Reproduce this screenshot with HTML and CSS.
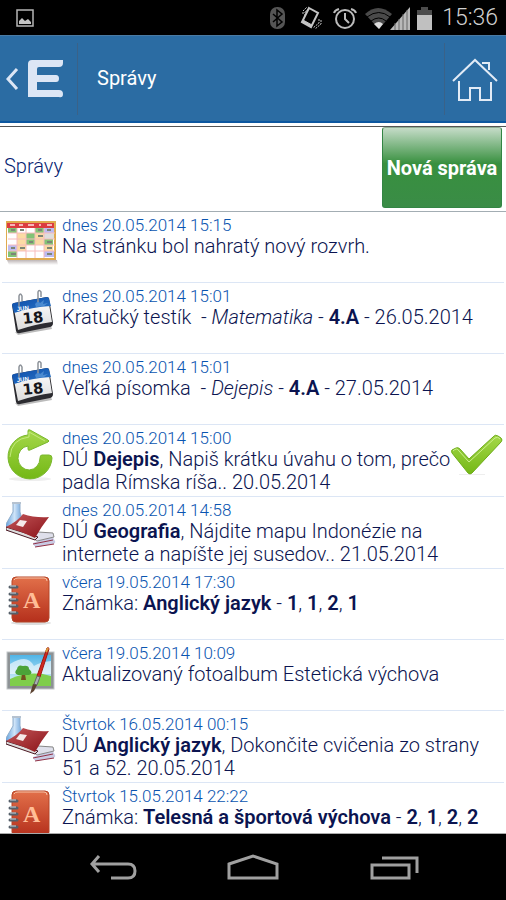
FILE: index.html
```html
<!DOCTYPE html>
<html lang="sk">
<head>
<meta charset="utf-8">
<meta name="viewport" content="width=device-width, initial-scale=1">
<title>Správy</title>
<link rel="stylesheet" href="styles.css">
</head>
<body>
<svg class="sprite" aria-hidden="true">
  <defs>
    <linearGradient id="green" x1="0" y1="0" x2="0" y2="1"><stop offset="0" stop-color="#a5d84a"/><stop offset="1" stop-color="#74b816"/></linearGradient>
    <linearGradient id="blue" x1="0" y1="0" x2="1" y2="1"><stop offset="0" stop-color="#0b4aa8"/><stop offset="1" stop-color="#2d78c8"/></linearGradient>
    <linearGradient id="paper" x1="0" y1="0" x2="0" y2="1"><stop offset="0" stop-color="#fff"/><stop offset="1" stop-color="#dcdcdc"/></linearGradient>
    <linearGradient id="cover" x1="0" y1="0" x2="0" y2="1"><stop offset="0" stop-color="#e2704a"/><stop offset="1" stop-color="#b5301c"/></linearGradient>
    <linearGradient id="maroon" x1="0" y1="0" x2="1" y2="1"><stop offset="0" stop-color="#c4575a"/><stop offset="1" stop-color="#8a1218"/></linearGradient>
    <linearGradient id="sky" x1="0" y1="0" x2="0" y2="1"><stop offset="0" stop-color="#4fb4e6"/><stop offset="1" stop-color="#e6f7fc"/></linearGradient>
    <linearGradient id="flask" x1="0" y1="0" x2="1" y2="0"><stop offset="0" stop-color="#5f9edb"/><stop offset=".5" stop-color="#cfe4f8"/><stop offset="1" stop-color="#5a97d6"/></linearGradient>
    <linearGradient id="shade" x1="0" y1="0" x2="0" y2="1"><stop offset="0" stop-color="#bdb5b5"/><stop offset="1" stop-color="#fff"/></linearGradient>
  </defs>
  <symbol id="timetable" viewBox="0 0 56 56">
    <path d="M1 44h50l1 5H3z" fill="url(#shade)"/>
    <rect x="0" y="6" width="49" height="37" fill="#fff" stroke="#e0ab50" stroke-width="2"/>
    <rect x="1" y="7" width="47" height="5" fill="#dc3c40"/>
    <path d="M4 9h5M13 9h4M22 9h6M33 9h2M41 9h5" stroke="#f6b6b6" stroke-width="2"/>
    <path d="M2 12h9v5H2zM29 12h9v5h-9zM20 17h9v12h-9zM38 23h9v6h-9zM2 35h9v6H2z" fill="#83c376"/>
    <path d="M11 17h9v12h-9zM29 17h9v12h-9zM11 29h9v6h-9zM38 29h9v6h-9z" fill="#fbdba4"/>
    <path d="M38 12h10v5H38zM2 29h9v6H2zM38 35h10v6H38z" fill="#bcbbf2"/>
    <path d="M38 17h10v6H38z" fill="#ddd"/>
    <path d="M11 12v30M20 12v30M29 12v30M38 12v30M2 17h47M2 23h47M2 29h47M2 35h47" stroke="#f7bcbc"/>
    <path d="M5 14h4M14 14h4M32 14h4M41 14h4M32 20h5M23 26h4M41 26h5M5 32h4M14 32h5M41 32h5M5 38h5M41 38h5" stroke="#7d8676" stroke-width="2"/>
  </symbol>
  <symbol id="calendar" viewBox="0 0 56 56">
    <path d="M9 45l36-6 1 3-34 6z" fill="#bbb"/>
    <path d="M6 18l4 26q1 3 4 2l30-6q3-1 3-4l-4-25-2-1L8 16z" fill="#2b2b30"/>
    <path d="M7 17l35-6 4 24q-16 2-34 8z" fill="url(#paper)"/>
    <path d="M6 18q0-2 2-2l33-6q2 0 2 2l2 7Q26 20 8 26z" fill="url(#blue)"/>
    <path d="M29 17l3-3 2 2 4-3-1 4 5-1-4 3-8 1z" fill="#68a3df" opacity=".6"/>
    <path d="M13 19V9q1-4 3 0v5M32 15V5q1-3 3 0v5" fill="none" stroke="#8d9299" stroke-width="1.500"/>
  </symbol>
  <symbol id="refresh" viewBox="0 0 56 56">
    <ellipse cx="24" cy="50" rx="21" ry="2" fill="#eee"/>
    <path d="M22 6V2q0-2 2-1l18 10q2 1 0 2L24 21q-2 1-2-1v-3A11 12 0 1 0 34 29q0-3 2-3h7q3 0 3 3A22 22 0 1 1 22 6z" fill="url(#green)" stroke="#7ab82e"/>
    <path d="M4 28Q5 10 23 8V3l16 9" fill="none" stroke="#cdef8c" opacity=".8"/>
  </symbol>
  <symbol id="check" viewBox="0 0 54 42">
    <path d="M9 40h26v1H9z" fill="#eee"/>
    <path d="M2 19q-1-2 0-3l4-2q2-1 4 1l9 10L43 3q2-3 5-1l3 2q2 2 0 4L22 39q-2 2-4 0z" fill="url(#green)" stroke="#6dac18"/>
    <path d="M3 17q4-4 6 0l10 11L45 4q3-2 5 1" fill="none" stroke="#cdf08c"/>
  </symbol>
  <symbol id="homework" viewBox="0 0 56 56">
    <path d="M7 2h7v9l3 10q2 8-5 9H3q-5-2-3-7l7-12z" fill="url(#flask)" stroke="#91aecb"/>
    <path d="M6 2h9" stroke="#b5c2d0" stroke-width="2"/>
    <path d="M27 42l19-7 3 5q1 2-2 3l-16 3q-3 0-4-4z" fill="#c9cbe4"/>
    <path d="M27 43l20-4M29 46l19-3" stroke="#943346"/>
    <path d="M28 38q-1-5 4-7l15 1 1 4-17 4z" fill="#dfe0eb" stroke="#888"/>
    <path d="M0 26v3l29 10 3-3z" fill="#ddd" stroke="#4b1721"/>
    <path d="M0 26Q12 20 17 13q12 4 26 3-8 10-14 21Q15 30 0 26z" fill="url(#maroon)"/>
    <path d="M14 19l7 1-4 6-7-2z" fill="#f5eaea"/>
  </symbol>
  <symbol id="grade" viewBox="0 0 56 56">
    <ellipse cx="25" cy="50" rx="20" ry="2" fill="#ddd"/>
    <rect x="6" y="4" width="37" height="45" rx="4" fill="url(#cover)" stroke="#b44427"/>
    <path d="M8 7q1-2 4-2h26q3 0 3 3" fill="none" stroke="#f6c2a5"/>
    <path d="M4 14h7M4 21h7M4 27h7M4 33h7M4 40h7" stroke="#56606a" stroke-width="3" stroke-linecap="round"/>
    <path d="M4 13h6M4 20h6M4 26h6M4 32h6M4 39h6" stroke="#c8d6df"/>
  </symbol>
  <symbol id="photo" viewBox="0 0 56 56">
    <rect x="1" y="8" width="47" height="37" fill="#8d9295" stroke="#c4c7c9"/>
    <rect x="4" y="11" width="41" height="31" fill="url(#sky)"/>
    <path d="M4 20q8-5 14-5t10 7q6-4 17-5v13H4z" fill="#fff" opacity=".6"/>
    <path d="M4 35q20-9 41-3v10H4z" fill="#7fce4b"/>
    <path d="M16 30h3l1 6h-5z" fill="#73521f"/>
    <path d="M12 31q-5-2-1-6 1-5 6-3 6-1 6 3 5 4 0 6z" fill="#4ba338"/>
    <path d="M41 4q2-1 2 1l-9 28-3-1z" fill="#d32a20" stroke="#9f1713"/>
    <path d="M40 8l2-4" stroke="#d99c3e" stroke-width="2"/>
    <path d="M31 32l3 1-3 8-3-1z" fill="#a9afb3" stroke="#666"/>
    <path d="M27 40l4 1-3 6-4 3z" fill="#5c4332"/>
  </symbol>
</svg>

<header class="status">
  <svg class="status-shot" viewBox="0 0 18 18" aria-hidden="true"><rect x="1" y="1" width="16" height="16" fill="none" stroke="#b5b5b5" stroke-width="1.500"/><path d="M3 15v-3l3-3 3 3 3-2 3 3v2z" fill="#c4c4c4"/></svg>
  <div class="status-right">
    <svg class="status-icons" viewBox="0 0 164 26" aria-hidden="true">
      <rect x="0" y="2" width="15" height="22" rx="7" fill="#555"/>
      <path d="M3 9l9 8-5 4V5l5 4-9 8" fill="none" stroke="#000" stroke-width="1.500"/>
      <g fill="none" stroke="#c4c4c4"><path d="M39 3l9 5-7 14-9-5z" stroke-width="2"/><path d="M33 15l9 5-1 2-9-5z" fill="#c4c4c4"/><path d="M33 9V6l4-4M35 11V7l3-3M49 14v4l-6 5M51 15v4l-6 5" stroke-dasharray="2 1"/></g>
      <g fill="none" stroke="#bbb" stroke-width="2"><circle cx="75" cy="14" r="9"/><path d="M75 8v6l4 4M64 8q1-3 5-4M86 8q-1-3-5-4"/></g>
      <path d="M95 9q13-12 27 0l-13 15z" fill="#4a4a4a"/><path d="M97 12q12-9 23 0M101 16q8-6 15 0" fill="none" stroke="#000"/><path d="M104 19q5-4 9 0l-4 5z" fill="#ddd"/>
      <path d="M120 25l20-23v23z" fill="#b9b9b9"/><path d="M125 18v7M129 14v11M133 9v16M137 5v20" stroke="#666"/>
      <path d="M147 5h4V2h7v3h4v5h-15z" fill="#4c4c4c"/><path d="M147 10h15v15h-15z" fill="#c0c0c0"/>
    </svg>
    <time class="clock">15:36</time>
  </div>
</header>

<nav class="appbar">
  <a class="back" href="#" aria-label="Späť">
    <svg viewBox="0 0 60 42" aria-hidden="true"><path d="M11 11L2 21l9 10" fill="none" stroke="#dce6f5" stroke-width="3"/>
      <path d="M22 6Q22 2 26 2H57V5Q57 9 53 9H33Q31 9 31 11V17H50Q53 17 53 20.500T50 24H31V32H53Q57 32 57 36T53 39H22z" fill="#dce6f5"/></svg>
  </a>
  <h1 class="appbar-title">Správy</h1>
  <a class="home" href="#" aria-label="Domov">
    <svg viewBox="0 0 46 44" aria-hidden="true"><path d="M1 23L23 2l22 21M7 23v19h11V30h10v12h11V24M30 5h7v7" fill="none" stroke="#e2ebf6" stroke-width="2"/></svg>
  </a>
</nav>

<main class="page">
  <div class="toolbar">
    <h2 class="toolbar-title">Správy</h2>
    <button class="new-message" type="button">Nová správa</button>
  </div>
  <ul class="messages">
    <li class="message"><svg class="icon" aria-hidden="true"><use href="#timetable"/></svg><div class="body"><time class="date">dnes 20.05.2014 15:15</time><p class="text">Na stránku bol nahratý nový rozvrh.</p></div></li>
    <li class="message"><svg class="icon" viewBox="0 0 56 56" aria-hidden="true"><use href="#calendar"/><text x="11" y="24" transform="rotate(-6 11 24)" class="month">JUN</text><text x="17" y="37" transform="rotate(-6 17 37)" class="day">18</text></svg><div class="body"><time class="date">dnes 20.05.2014 15:01</time><p class="text">Kratučký testík &nbsp;- <i>Matematika</i> - <b>4.A</b> - 26.05.2014</p></div></li>
    <li class="message"><svg class="icon" viewBox="0 0 56 56" aria-hidden="true"><use href="#calendar"/><text x="11" y="24" transform="rotate(-6 11 24)" class="month">JUN</text><text x="17" y="37" transform="rotate(-6 17 37)" class="day">18</text></svg><div class="body"><time class="date">dnes 20.05.2014 15:01</time><p class="text">Veľká písomka &nbsp;- <i>Dejepis</i> - <b>4.A</b> - 27.05.2014</p></div></li>
    <li class="message"><svg class="icon" aria-hidden="true"><use href="#refresh"/></svg><div class="body"><time class="date">dnes 20.05.2014 15:00</time><p class="text">DÚ <b>Dejepis</b>, Napiš krátku úvahu o tom, prečo<br>padla Rímska ríša.. 20.05.2014</p></div><svg class="done" role="img" aria-label="Hotovo"><use href="#check"/></svg></li>
    <li class="message"><svg class="icon" aria-hidden="true"><use href="#homework"/></svg><div class="body"><time class="date">dnes 20.05.2014 14:58</time><p class="text">DÚ <b>Geografia</b>, Nájdite mapu Indonézie na<br>internete a napíšte jej susedov.. 21.05.2014</p></div></li>
    <li class="message"><svg class="icon" viewBox="0 0 56 56" aria-hidden="true"><use href="#grade"/><text x="17" y="35" class="letter">A</text></svg><div class="body"><time class="date">včera 19.05.2014 17:30</time><p class="text">Známka: <b>Anglický jazyk</b> - <b>1</b>, <b>1</b>, <b>2</b>, <b>1</b></p></div></li>
    <li class="message"><svg class="icon" aria-hidden="true"><use href="#photo"/></svg><div class="body"><time class="date">včera 19.05.2014 10:09</time><p class="text">Aktualizovaný fotoalbum Estetická výchova</p></div></li>
    <li class="message"><svg class="icon" aria-hidden="true"><use href="#homework"/></svg><div class="body"><time class="date">Štvrtok 16.05.2014 00:15</time><p class="text">DÚ <b>Anglický jazyk</b>, Dokončite cvičenia zo strany<br>51 a 52. 20.05.2014</p></div></li>
    <li class="message"><svg class="icon" viewBox="0 0 56 56" aria-hidden="true"><use href="#grade"/><text x="17" y="35" class="letter">A</text></svg><div class="body"><time class="date">Štvrtok 15.05.2014 22:22</time><p class="text">Známka: <b>Telesná a športová výchova</b> - <b>2</b>, <b>1</b>, <b>2</b>, <b>2</b></p></div></li>
  </ul>
</main>

<footer class="navbar">
  <button type="button" aria-label="Späť"><svg viewBox="0 0 52 30" aria-hidden="true"><path d="M13 4L6 12l7 8M6 12h36q7 0 7 7t-7 7H25"/></svg></button>
  <button type="button" aria-label="Domov"><svg viewBox="0 0 52 30" aria-hidden="true"><path d="M2 12L26 4l24 8v14H2z"/></svg></button>
  <button type="button" aria-label="Nedávne"><svg viewBox="0 0 52 30" aria-hidden="true"><path d="M4 13h37v13H4zM14 6h35v15"/></svg></button>
</footer>
</body>
</html>
```
FILE: styles.css
```css
* { box-sizing: border-box; }

body {
  margin: 0;
  height: 100vh;
  display: flex;
  flex-direction: column;
  background: #fff;
  font-family: Roboto, "Liberation Sans", sans-serif;
  color: #0b1450;
}

h1, h2, p, ul { margin: 0; padding: 0; font-weight: 400; }
a, svg { display: block; }
.sprite { position: absolute; width: 0; height: 0; }

.status {
  flex: none;
  height: 35px;
  padding: 0 8px 0 16px;
  display: flex;
  align-items: center;
  justify-content: space-between;
  background: #000;
}
.status-shot { width: 18px; height: 18px; }
.status-right { display: flex; align-items: center; gap: 8px; }
.status-icons { width: 164px; height: 26px; }
.clock { font-size: 23px; line-height: 32px; font-weight: 300; color: #d0d0d0; }

.appbar {
  flex: none;
  height: 88px;
  display: flex;
  align-items: center;
  background: #2b6ca3;
  border-top: 1px solid #4a7ba4;
  border-bottom: 2px solid #0d58a0;
}
.back { width: 78px; padding-left: 6px; height: 72px; border-right: 1px solid #3a6288; display: flex; align-items: center; }
.back svg { width: 60px; height: 42px; }
.appbar-title { flex: 1; padding: 0 0 2px 19px; font-size: 20px; line-height: 24px; color: #fff; }
.home { width: 62px; height: 72px; padding: 2px 0 0 7px; border-left: 1px solid #3a6288; display: flex; align-items: center; }
.home svg { width: 46px; height: 44px; }

.page { flex: 1; min-height: 0; overflow: hidden; padding-top: 3px; border-bottom: 1px solid #aaa; }

.toolbar {
  height: 86px;
  padding: 0 4px;
  display: flex;
  align-items: center;
  justify-content: space-between;
  border-top: 1px solid #555;
  border-bottom: 1px solid #a3adb3;
}
.toolbar-title { font-size: 20px; line-height: 24px; padding-bottom: 6px; font-weight: 300; color: #051c70; }
.new-message {
  align-self: flex-start;
  width: 120px;
  height: 81px;
  padding: 0;
  border: 1px solid #338544;
  border-top-color: #8faf94;
  border-radius: 3px;
  background: linear-gradient(#c5dcc8, #38903f 45%, #3a8c46);
  color: #fff;
  font: 700 20px/24px Roboto, sans-serif;
  white-space: nowrap;
  display: flex;
  align-items: center;
  justify-content: center;
}

.messages { list-style: none; padding: 0 2px; }
.message {
  min-height: 71px;
  padding: 4px 0 2px;
  display: flex;
  align-items: flex-start;
  border-bottom: 1px solid #dce6f5;
}
.icon { flex: none; width: 56px; height: 56px; margin-left: 4px; }
.body { flex: 1; min-width: 0; white-space: nowrap; }
.date { display: block; font-size: 17px; line-height: 19px; font-weight: 300; color: #0a55b0; }
.text { font-size: 20px; line-height: 23px; font-weight: 300; }
.text b { font-weight: 600; }
.done { flex: none; width: 54px; height: 42px; margin-top: 5px; }

.month { font: 700 6px "Liberation Sans", sans-serif; fill: #fff; }
.day { font: 700 15px "DejaVu Sans", sans-serif; fill: #15151a; }
.letter { font: 700 24px "Liberation Serif", serif; fill: #ffbd96; }

.navbar {
  flex: none;
  height: 66px;
  padding: 0 42px;
  display: grid;
  grid-template-columns: repeat(3, 1fr);
  place-items: center;
  background: #000;
}
.navbar button { padding: 0; border: 0; background: none; }
.navbar svg { width: 52px; height: 30px; fill: none; stroke: #a0a0a0; stroke-width: 3; }
```
